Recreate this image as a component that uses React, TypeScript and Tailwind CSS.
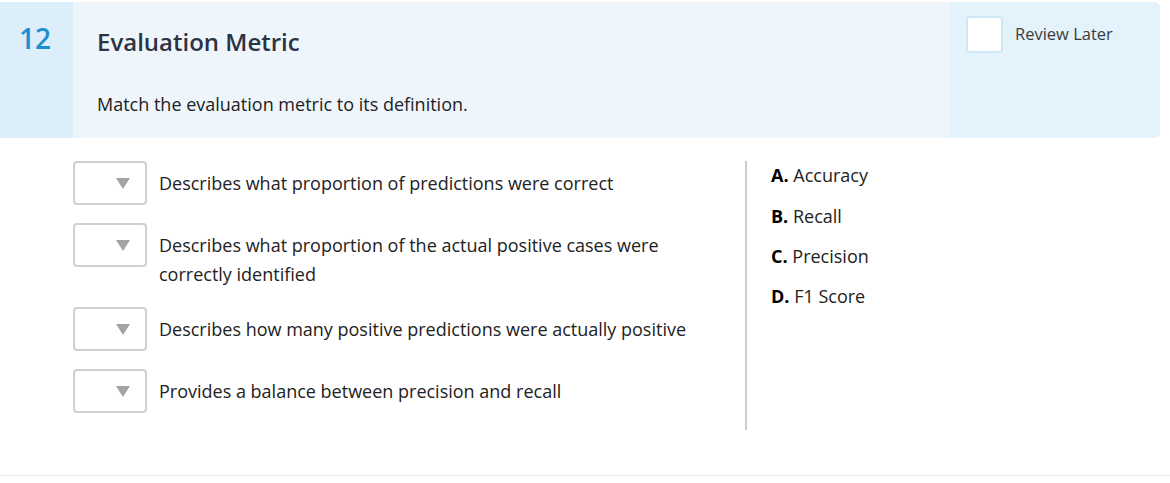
const prompts = [
  'Describes what proportion of predictions were correct',
  'Describes what proportion of the actual positive cases were correctly identified',
  'Describes how many positive predictions were actually positive',
  'Provides a balance between precision and recall',
]

const answers = [
  { letter: 'A.', text: 'Accuracy' },
  { letter: 'B.', text: 'Recall' },
  { letter: 'C.', text: 'Precision' },
  { letter: 'D.', text: 'F1 Score' },
]

function Dropdown() {
  return (
    <div className="w-[74px] h-[44px] shrink-0 rounded-[4px] border-2 border-[#d0d0d0] bg-white flex items-center justify-end pr-[15px]">
      <svg width="14" height="11" viewBox="0 0 14 11">
        <path d="M0 0 L14 0 L7 11 Z" fill="#a3a3a3" />
      </svg>
    </div>
  )
}

export default function App() {
  return (
    <div className="w-[1170px] h-[483px] bg-white pt-[2px] pr-[10px] font-['Open_Sans',sans-serif]">
      <div className="flex h-[136px] rounded-r-[5px] overflow-hidden">
        <div className="w-[73px] bg-[#dbeef9] pt-[18px] pl-[19px]">
          <span className="text-[28px] leading-[36px] font-semibold text-[#1b8fd2]">12</span>
        </div>
        <div className="flex-1 bg-[#eef6fc] pl-[24px] pt-[23px]">
          <h2 className="text-[24px] leading-[34px] font-semibold text-[#2c3443]">Evaluation Metric</h2>
          <p className="mt-[32px] text-[18px] leading-[26px] text-[#222]">
            Match the evaluation metric to its definition.
          </p>
        </div>
        <div className="w-[210px] bg-[#e3f2fb] pl-[16px] pt-[14px] flex items-start gap-[12px]">
          <div className="w-[37px] h-[37px] rounded-[4px] bg-white border-2 border-[#cfe7f5]" />
          <span className="text-[16.5px] leading-[22px] pt-[7px] text-[#3c3c3c]">Review Later</span>
        </div>
      </div>

      <div className="flex pt-[23px] pl-[73px]">
        <div className="w-[672px] flex flex-col gap-[18px] pb-[18px]">
          {prompts.map((p) => (
            <div key={p} className="flex items-start gap-[12px]">
              <Dropdown />
              <p className="pt-[8px] pr-[40px] text-[18px] leading-[29px] text-[#222]">{p}</p>
            </div>
          ))}
        </div>
        <div className="w-[2px] h-[269px] bg-[#cccccc]" />
        <div className="pl-[24px] pt-[1px] flex flex-col gap-[14px]">
          {answers.map((a, i) => (
            <div key={a.letter} className={`text-[18px] leading-[26px] text-[#222] ${i === 1 ? 'mt-[1px]' : ''}`}>
              <span className="font-bold text-black">{a.letter}</span> {a.text}
            </div>
          ))}
        </div>
      </div>

      <div className="mt-[44px] w-[1170px] h-[1px] bg-[#ececec]" />
    </div>
  )
}
